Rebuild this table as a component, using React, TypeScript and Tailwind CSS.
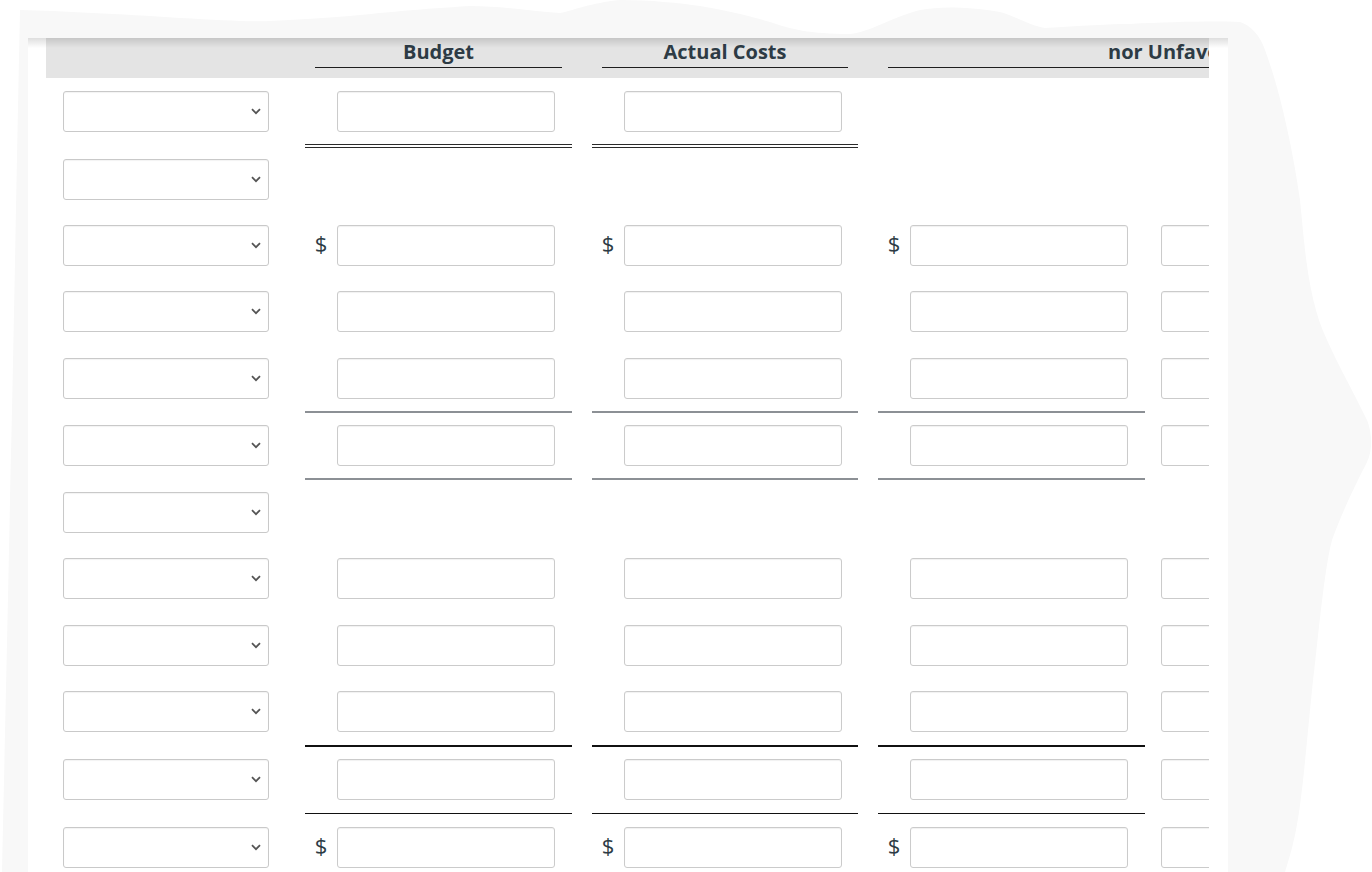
import React from "react";

type Line = "none" | "double" | "gray" | "black2" | "black1";
type RowDef = {
  h: string;
  cells: number; // number of main input columns (0..3)
  dollar: boolean;
  col4: boolean;
  line: Line;
};

const rows: RowDef[] = [
  { h: "h-[68px]", cells: 2, dollar: false, col4: false, line: "double" },
  { h: "h-[66px]", cells: 0, dollar: false, col4: false, line: "none" },
  { h: "h-[66px]", cells: 3, dollar: true, col4: true, line: "none" },
  { h: "h-[67px]", cells: 3, dollar: false, col4: true, line: "none" },
  { h: "h-[67px]", cells: 3, dollar: false, col4: true, line: "gray" },
  { h: "h-[67px]", cells: 3, dollar: false, col4: true, line: "gray" },
  { h: "h-[66px]", cells: 0, dollar: false, col4: false, line: "none" },
  { h: "h-[67px]", cells: 3, dollar: false, col4: true, line: "none" },
  { h: "h-[66px]", cells: 3, dollar: false, col4: true, line: "none" },
  { h: "h-[68px]", cells: 3, dollar: false, col4: true, line: "black2" },
  { h: "h-[68px]", cells: 3, dollar: false, col4: true, line: "black1" },
  { h: "h-[45px]", cells: 3, dollar: true, col4: true, line: "none" },
];

const colWidths = ["w-[267px]", "w-[266px]", "w-[267px]"];
const colMargins = ["ml-[36px]", "ml-[20px]", "ml-[20px]"];

function Select() {
  return (
    <div className="relative flex h-[41px] w-[206px] shrink-0 items-center justify-end rounded-[3px] border border-[#c9c9c9] bg-white pr-[7px] shadow-[inset_0_1px_1px_rgba(0,0,0,0.05)]">
      <svg width="10" height="7" viewBox="0 0 10 7" fill="none">
        <path d="M1 1.2 L5 5.2 L9 1.2" stroke="#555" strokeWidth="1.8" />
      </svg>
    </div>
  );
}

function Input() {
  return (
    <div className="h-[41px] w-[218px] shrink-0 rounded-[3px] border border-[#cbcbcb] bg-white shadow-[inset_0_1px_1px_rgba(0,0,0,0.06)]" />
  );
}

function LineEl({ kind }: { kind: Line }) {
  if (kind === "double")
    return (
      <div className="mt-[12px] flex flex-col gap-[2px]">
        <div className="h-px bg-[#2a2a2a]" />
        <div className="h-px bg-[#2a2a2a]" />
      </div>
    );
  if (kind === "gray") return <div className="mt-[12px] h-[2px] bg-[#8c9095]" />;
  if (kind === "black2") return <div className="mt-[13px] h-[2px] bg-[#111]" />;
  if (kind === "black1") return <div className="mt-[13px] h-px bg-[#111]" />;
  return null;
}

function Cell({ idx, dollar, line }: { idx: number; dollar: boolean; line: Line }) {
  return (
    <div className={`${colWidths[idx]} ${colMargins[idx]} flex shrink-0 flex-col`}>
      <div className="flex h-[41px] items-center">
        <span className="mb-[5px] w-[32px] text-center text-[22px] leading-none text-[#2d3b45]">
          {dollar ? "$" : ""}
        </span>
        <Input />
      </div>
      <LineEl kind={line} />
    </div>
  );
}

export default function App() {
  return (
    <div
      className="relative h-[872px] w-[1372px] overflow-hidden bg-white"
      style={{ fontFamily: '"Open Sans", "Liberation Sans", sans-serif' }}
    >
      <svg className="absolute inset-0" width="1372" height="872" viewBox="0 0 1372 872">
        <path
          fill="#f8f8f8"
          d="M20 10 C60 11 120 14 180 18 C220 20 250 22 270 21 C310 19 340 17 360 15 C390 12 420 9 470 6 C500 6 530 11 560 13 C575 10 590 3 620 0 C650 0 680 3 700 6 C725 10 750 16 770 22 C790 29 810 34 850 34 C870 32 890 18 920 10 C940 7 960 6 1000 12 C1020 18 1030 26 1045 28 C1080 26 1110 24 1130 24 C1170 22 1210 21 1240 22 C1250 25 1260 35 1265 50 C1280 90 1293 150 1300 200 C1305 250 1308 300 1327 340 C1338 365 1355 395 1367 420 C1372 432 1373 450 1367 462 C1357 482 1345 505 1332 540 C1324 570 1318 640 1312 690 C1306 750 1302 800 1296 830 C1292 850 1288 862 1285 872 L2 872 C4 780 7 650 10 500 C13 380 16 200 20 10 Z"
        />
      </svg>

      <div className="relative ml-[28px] mt-[38px] h-[834px] w-[1200px] bg-white">
        <div className="w-[1163px] translate-x-[18px] overflow-hidden">
          {/* header */}
          <div className="flex h-[40px] items-start bg-[#e4e4e4] text-[20px] font-bold text-[#2d3b45]">
            <div className="w-[259px] shrink-0" />
            <div className="w-[267px] shrink-0 px-[10px] pt-[1px]">
              <div className="border-b border-[#1e1e1e] pb-[2px] text-center leading-[26px]">Budget</div>
            </div>
            <div className="ml-[20px] w-[266px] shrink-0 px-[10px] pt-[1px]">
              <div className="border-b border-[#1e1e1e] pb-[2px] text-center leading-[26px]">Actual Costs</div>
            </div>
            <div className="ml-[20px] w-[600px] shrink-0 pl-[10px] pt-[1px]">
              <div className="whitespace-nowrap border-b border-[#1e1e1e] pb-[2px] pl-[220px] leading-[26px]">
                nor Unfavorable
              </div>
            </div>
          </div>

          {/* rows */}
          <div className="pt-[13px]">
            {rows.map((r, i) => (
              <div key={i} className={`${r.h} flex items-start pl-[17px]`}>
                <Select />
                {Array.from({ length: r.cells }).map((_, c) => (
                  <Cell key={c} idx={c} dollar={r.dollar} line={r.line} />
                ))}
                {r.col4 && (
                  <div className="ml-[16px] shrink-0">
                    <Input />
                  </div>
                )}
              </div>
            ))}
          </div>
        </div>
        <div className="pointer-events-none absolute left-0 right-0 top-0 h-[10px] bg-gradient-to-b from-[rgba(0,0,0,0.13)] to-transparent" />
      </div>
    </div>
  );
}
